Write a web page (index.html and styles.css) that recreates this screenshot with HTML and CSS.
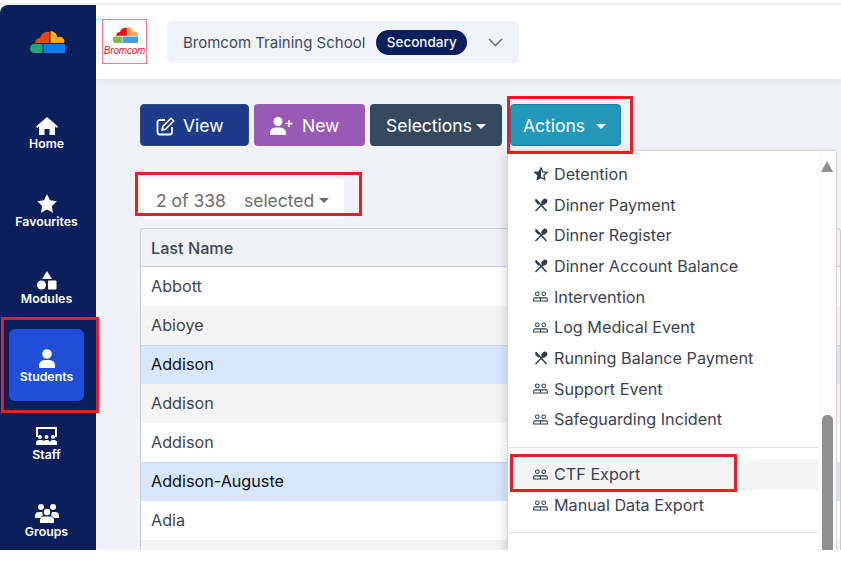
FILE: index.html
```html
<!DOCTYPE html>
<html lang="en">
<head>
<meta charset="utf-8">
<title>Bromcom</title>
<link rel="stylesheet" href="styles.css">
</head>
<body>
<div class="frame">
  <aside class="rail">
    <div class="rail-logo">
      <svg width="36" height="22" viewBox="0 0 36 22"><path d="M13.500 13H5.500a4.500 4.500 0 0 0 0 9h8z" fill="#27a27b"/><path d="M14.500 13H36a5 5 0 0 1-5 9H14.500z" fill="#0a7cf0"/><path d="M6 12a5 5 0 0 1 5-5 8 8 0 0 1 9.500-6v11z" fill="#e8480c"/><path d="M21.500 0a7.500 7.500 0 0 1 7 6.500 4.500 4.500 0 0 1 6.500 5.500H21.500z" fill="#f9a90f"/></svg>
    </div>
    <nav class="rail-nav">
      <a class="rail-item">
        <svg width="22" height="18" viewBox="0 0 22 18"><path d="M11 0 22 9.500l-1.300 1.400L19 9.500V18h-5.500v-6h-5v6H3V9.500L1.300 10.900 0 9.500z" fill="#fff"/></svg>
        <span>Home</span>
      </a>
      <a class="rail-item">
        <svg width="20" height="19" viewBox="0 0 20 19"><path d="m10 0 3 6.200 6.800 1-5 4.700 1.200 6.800L10 15.500l-6 3.200 1.200-6.800-5-4.700 6.800-1z" fill="#fff"/></svg>
        <span>Favourites</span>
      </a>
      <a class="rail-item">
        <svg width="20" height="19" viewBox="0 0 20 19"><path d="M10 0l5 8H5z" fill="#fff"/><circle cx="4.500" cy="14" r="4.500" fill="#fff"/><rect x="11" y="9.500" width="8.500" height="9" rx="1" fill="#fff"/></svg>
        <span>Modules</span>
      </a>
      <a class="rail-item is-active">
        <svg width="18" height="19" viewBox="0 0 18 19"><circle cx="9" cy="5" r="4.800" fill="#fff"/><path d="M1 19v-2.500A5.500 5.500 0 0 1 6.500 11h5a5.500 5.500 0 0 1 5.500 5.500V19z" fill="#fff"/></svg>
        <span>Students</span>
      </a>
      <a class="rail-item">
        <svg width="23" height="20" viewBox="0 0 23 20"><path d="M2 11V2h19v9" fill="none" stroke="#fff" stroke-width="2"/><g fill="#fff"><circle cx="5" cy="11" r="2"/><circle cx="11.500" cy="11" r="2"/><circle cx="18" cy="11" r="2"/><path d="M1 19v-2a3 3 0 0 1 3-3h2a3 3 0 0 1 3 3v2zM8 19v-2a3 3 0 0 1 3-3h1a3 3 0 0 1 3 3v2zM15 19v-2a3 3 0 0 1 3-3h1a3 3 0 0 1 3 3v2z"/></g></svg>
        <span>Staff</span>
      </a>
      <a class="rail-item">
        <svg width="24" height="19" viewBox="0 0 24 19"><g fill="#fff"><circle cx="6" cy="3" r="3"/><circle cx="18" cy="3" r="3"/><circle cx="12" cy="8" r="3.200"/><path d="M0 12a4 4 0 0 1 4-4h3l1 3-3 3H0zM24 12a4 4 0 0 0-4-4h-3l-1 3 3 3h5zM5 19v-2.500a4 4 0 0 1 4-4h6a4 4 0 0 1 4 4V19z"/></g></svg>
        <span>Groups</span>
      </a>
    </nav>
  </aside>

  <div class="main">
    <header class="topbar">
      <div class="school-logo">
        <svg width="26" height="16" viewBox="0 0 36 22"><path d="M13.500 13H5.500a4.500 4.500 0 0 0 0 9h8z" fill="#7fb947"/><path d="M14.500 13H36a5 5 0 0 1-5 9H14.500z" fill="#4a9fd8"/><path d="M6 12a5 5 0 0 1 5-5 8 8 0 0 1 9.500-6v11z" fill="#f00d14"/><path d="M21.500 0a7.500 7.500 0 0 1 7 6.500 4.500 4.500 0 0 1 6.500 5.500H21.500z" fill="#f2a34b"/></svg>
        <span>Bromcom</span>
      </div>
      <div class="school-picker">
        <span class="school-name">Bromcom Training School</span>
        <span class="pill">Secondary</span>
        <svg class="chev" width="15" height="9" viewBox="0 0 15 9"><path d="m1 1 6.500 6.500L14 1" fill="none" stroke="#66738a" stroke-width="1.600"/></svg>
      </div>
    </header>

    <div class="content">
      <div class="toolbar">
        <button class="btn btn-view">
          <svg width="19" height="19" viewBox="0 0 19 19"><path d="M9 3H4a2.500 2.500 0 0 0-2.500 2.500v9.500A2.500 2.500 0 0 0 4 17.500h9.500a2.500 2.500 0 0 0 2.500-2.500v-5" fill="none" stroke="#fff" stroke-width="1.800"/><path d="M15 1.300 17.700 4 9.500 12.200l-3.400.700.700-3.400z" fill="none" stroke="#fff" stroke-width="1.600"/></svg>
          View
        </button>
        <button class="btn btn-new">
          <svg width="23" height="18" viewBox="0 0 23 18"><circle cx="8" cy="4.500" r="4.500" fill="#fff"/><path d="M0 18v-2a5.500 5.500 0 0 1 5.500-5.500h5A5.500 5.500 0 0 1 16 16v2z" fill="#fff"/><path d="M19 3v7M15.500 6.500h7" stroke="#fff" stroke-width="1.500"/></svg>
          New
        </button>
        <button class="btn btn-sel">Selections<i class="caret"></i></button>
        <button class="btn btn-act">Actions<i class="caret caret-act"></i></button>
      </div>

      <div class="selected-tab">
        <span class="sel-count">2 of 338</span>
        <span>selected</span>
        <i class="caret caret-grey"></i>
      </div>

      <div class="table">
        <div class="thead">Last Name</div>
        <div class="row">Abbott</div>
        <div class="row alt">Abioye</div>
        <div class="row picked">Addison</div>
        <div class="row alt">Addison</div>
        <div class="row">Addison</div>
        <div class="row picked">Addison-Auguste</div>
        <div class="row">Adia</div>
        <div class="row alt"></div>
      </div>
    </div>
  </div>

  <div class="menu">
    <div class="menu-scroll">
      <ul class="menu-list">
        <li><svg class="mi" width="14" height="14" viewBox="0 0 14 14"><path d="m7 1 1.800 3.900 4.300.5-3.200 2.900.9 4.300L7 10.500l-3.800 2.100.9-4.300-3.200-2.900 4.300-.5z" fill="none" stroke="#2f3b4c" stroke-width="1.300"/><path d="M7 1 5.200 4.900.9 5.400l3.200 2.900-.9 4.300L7 10.500z" fill="#2f3b4c"/></svg>Detention</li>
        <li><svg class="mi" width="14" height="14" viewBox="0 0 14 14"><use href="#dine"/></svg>Dinner Payment</li>
        <li><svg class="mi" width="14" height="14" viewBox="0 0 14 14"><use href="#dine"/></svg>Dinner Register</li>
        <li><svg class="mi" width="14" height="14" viewBox="0 0 14 14"><use href="#dine"/></svg>Dinner Account Balance</li>
        <li><svg class="mi mi-ppl" width="15" height="11" viewBox="0 0 16 12"><use href="#ppl"/></svg>Intervention</li>
        <li><svg class="mi mi-ppl" width="15" height="11" viewBox="0 0 16 12"><use href="#ppl"/></svg>Log Medical Event</li>
        <li><svg class="mi" width="14" height="14" viewBox="0 0 14 14"><use href="#dine"/></svg>Running Balance Payment</li>
        <li><svg class="mi mi-ppl" width="15" height="11" viewBox="0 0 16 12"><use href="#ppl"/></svg>Support Event</li>
        <li><svg class="mi mi-ppl" width="15" height="11" viewBox="0 0 16 12"><use href="#ppl"/></svg>Safeguarding Incident</li>
        <li class="divider"></li>
        <li class="hover"><svg class="mi mi-ppl" width="15" height="11" viewBox="0 0 16 12"><use href="#ppl"/></svg>CTF Export</li>
        <li><svg class="mi mi-ppl" width="15" height="11" viewBox="0 0 16 12"><use href="#ppl"/></svg>Manual Data Export</li>
        <li class="divider"></li>
      </ul>
      <div class="scrollbar">
        <i class="sb-up"></i>
        <i class="sb-thumb"></i>
      </div>
    </div>
  </div>

  <i class="mark mark-students"></i>
  <i class="mark mark-actions"></i>
  <i class="mark mark-selected"></i>
  <i class="mark mark-ctf"></i>
</div>

<svg class="defs" width="0" height="0">
  <defs>
    <g id="dine">
      <path d="M2 1.500 12.500 13" stroke="#2f3b4c" stroke-width="1.500" fill="none"/>
      <path d="M1.500 13 9 5.500" stroke="#2f3b4c" stroke-width="1.500" fill="none"/>
      <ellipse cx="10.300" cy="3.700" rx="2.500" ry="3.300" transform="rotate(45 10.300 3.700)" fill="#2f3b4c"/>
      <path d="M1.300 .8 5.800 5.300 4.300 6.800 1.300 3.500z" fill="#2f3b4c"/>
    </g>
    <g id="ppl" fill="none" stroke="#2f3b4c" stroke-width="1.100">
      <circle cx="4.500" cy="3" r="2"/>
      <circle cx="11.500" cy="3" r="2"/>
      <path d="M.5 10.800V9a1.500 1.500 0 0 1 1.500-1.500h12A1.500 1.500 0 0 1 15.500 9v1.800z"/>
      <path d="M8 7.500v3.300"/>
    </g>
  </defs>
</svg>
</body>
</html>
```
FILE: styles.css
```css
* { box-sizing: border-box; }
html, body { margin: 0; padding: 0; background: #fff; }
body { font-family: Inter, "Liberation Sans", sans-serif; width: 841px; height: 562px; overflow: hidden; }

.frame {
  position: relative;
  width: 841px;
  height: 550px;
  padding-top: 5px;
  display: flex;
  overflow: hidden;
  background: #fff;
}
.frame::before {
  content: "";
  position: absolute;
  left: 0; right: 0; top: 3px;
  height: 2px;
  background: #f0f0f0;
}

.rail {
  width: 96px;
  flex: none;
  background: #0a1f5c;
  border-top-left-radius: 8px;
  padding-right: 3px;
  overflow: hidden;
  display: flex;
  flex-direction: column;
  align-items: center;
}
.rail-logo { height: 74px; flex: none; display: flex; align-items: center; justify-content: center; }
.rail-nav { flex: none; display: flex; flex-direction: column; align-items: center; gap: 5.500px; padding-top: 17px; }
.rail-item {
  width: 75px;
  height: 72px;
  flex: none;
  padding-top: 3px;
  border-radius: 6px;
  display: flex;
  flex-direction: column;
  align-items: center;
  justify-content: center;
  gap: 2px;
  color: #fff;
  font-size: 12.300px;
  font-weight: 600;
  line-height: 14px;
}
.rail-item.is-active { background: #1f4fd8; }

.main { flex: 1; min-width: 0; background: #f0f2f7; display: flex; flex-direction: column; }
.topbar {
  height: 74px;
  flex: none;
  background: #fff;
  box-shadow: 0 2px 8px rgba(30, 40, 70, 0.08);
  display: flex;
  align-items: center;
  padding-left: 6px;
  gap: 20px;
  position: relative;
}
.school-logo {
  width: 45px;
  height: 45px;
  margin-top: -1px;
  border: 1px solid #f07a80;
  display: flex;
  flex-direction: column;
  align-items: center;
  justify-content: center;
  gap: 2px;
  background: #fff;
  font-family: "Liberation Sans", sans-serif;
  font-style: italic;
  font-size: 10px;
  line-height: 11px;
  color: #e0141e;
  letter-spacing: -0.2px;
}
.school-picker {
  width: 352px;
  height: 42px;
  border-radius: 6px;
  background: #f0f3f8;
  display: flex;
  align-items: center;
  padding-left: 16px;
  font-size: 15px;
  color: #3e4b5e;
}
.school-name { white-space: nowrap; }
.pill {
  margin-left: 11px;
  height: 25px;
  padding: 0 10.500px;
  border-radius: 12.500px;
  background: #0a1f5c;
  color: #f4f6fb;
  font-size: 13.500px;
  font-weight: 500;
  line-height: 25px;
}
.chev { margin-left: 21px; }

.content { flex: 1; padding: 25px 0 0 44px; min-height: 0; }
.toolbar { display: flex; gap: 5px; }
.btn {
  height: 42px;
  border-radius: 4px;
  border: 1px solid transparent;
  color: #fff;
  font: 400 17.500px/1 Inter, "Liberation Sans", sans-serif;
  display: inline-flex;
  align-items: center;
  padding: 2px 0 0;
}
.btn-view { width: 109px; background: #1e3a8a; border-color: #2f4a7a; padding-left: 15px; gap: 8px; }
.btn-new { width: 111px; background: #9b59b6; padding-left: 15px; gap: 9px; }
.btn-sel { width: 132px; background: #34495e; padding-left: 15px; }
.btn-act { width: 111px; margin-left: 3px; background: #2498bb; border-color: #1c7f9e; padding-left: 12px; }
.caret {
  display: inline-block;
  width: 0; height: 0;
  border-left: 5px solid transparent;
  border-right: 5px solid transparent;
  border-top: 5px solid #fff;
  margin-left: 4px;
}
.caret-act { margin-left: 11px; }
.caret-grey { border-top-color: #6b6b6b; margin-left: 5px; }

.selected-tab {
  margin-top: 33px;
  margin-left: 1px;
  width: 203px;
  height: 40px;
  background: #fff;
  border-radius: 4px;
  display: flex;
  align-items: center;
  padding: 2px 0 0 15px;
  font-size: 17.500px;
  color: #6d6d6d;
}
.sel-count { margin-right: 18px; }

.table {
  margin-top: 9px;
  border: 1px solid #c9ccd2;
  border-bottom: 0;
  border-radius: 4px 4px 0 0;
  overflow: hidden;
}
.thead {
  height: 38px;
  background: #f0f2f7;
  border-bottom: 1px solid #c9ccd2;
  padding-left: 10px;
  font-size: 16.200px;
  font-weight: 500;
  line-height: 39px;
  color: #3a4656;
}
.row {
  height: 39px;
  background: #fff;
  padding-left: 10px;
  font-size: 16.200px;
  line-height: 39px;
  color: #3f4650;
}
.row.alt { background: #f4f4f4; }
.row.picked { background: #d8e7fc; color: #0c0f16; box-shadow: inset 0 1px 0 #c6d8ee; }

.menu {
  position: absolute;
  left: 507px;
  top: 150px;
  width: 330px;
  height: 420px;
  background: #fff;
  border: 1px solid #d6d6d6;
  border-radius: 3px 3px 0 0;
  box-shadow: -4px 2px 10px rgba(0, 0, 0, 0.10);
}
.menu-scroll { display: flex; height: 100%; }
.menu-list {
  list-style: none;
  margin: 0;
  padding: 7.500px 0 0;
  flex: 0 0 310px;
  font-size: 16.200px;
  color: #3a4352;
}
.menu-list li {
  height: 30.700px;
  padding-left: 26px;
  display: flex;
  align-items: center;
  white-space: nowrap;
}
.menu-list .mi { flex: none; margin-right: 6px; }
.menu-list .mi-ppl { margin-left: -1px; margin-right: 6px; }
.menu-list li.hover { background: #f4f4f4; height: 31px; }
.menu-list li.divider {
  height: 1px;
  padding: 0;
  background: #e4e4e4;
  margin: 12px 0 11px;
}
.scrollbar { flex: 1; background: #fbfbfb; position: relative; }
.sb-up {
  position: absolute;
  left: 3px; top: 10px;
  width: 0; height: 0;
  border-left: 6.500px solid transparent;
  border-right: 6.500px solid transparent;
  border-bottom: 11px solid #8f8f8f;
}
.sb-thumb {
  position: absolute;
  left: 4px; top: 264px;
  width: 11px;
  height: 160px;
  border-radius: 5px 5px 0 0;
  background: #8f8f8f;
}

.mark { position: absolute; border: 3px solid #ed1c24; pointer-events: none; }
.mark-students { left: 1px; top: 317px; width: 98px; height: 96px; }
.mark-actions { left: 507px; top: 96px; width: 126px; height: 58px; }
.mark-selected { left: 135px; top: 172px; width: 227px; height: 44px; }
.mark-ctf { left: 510px; top: 454px; width: 227px; height: 38px; }

.defs { position: absolute; }
```
